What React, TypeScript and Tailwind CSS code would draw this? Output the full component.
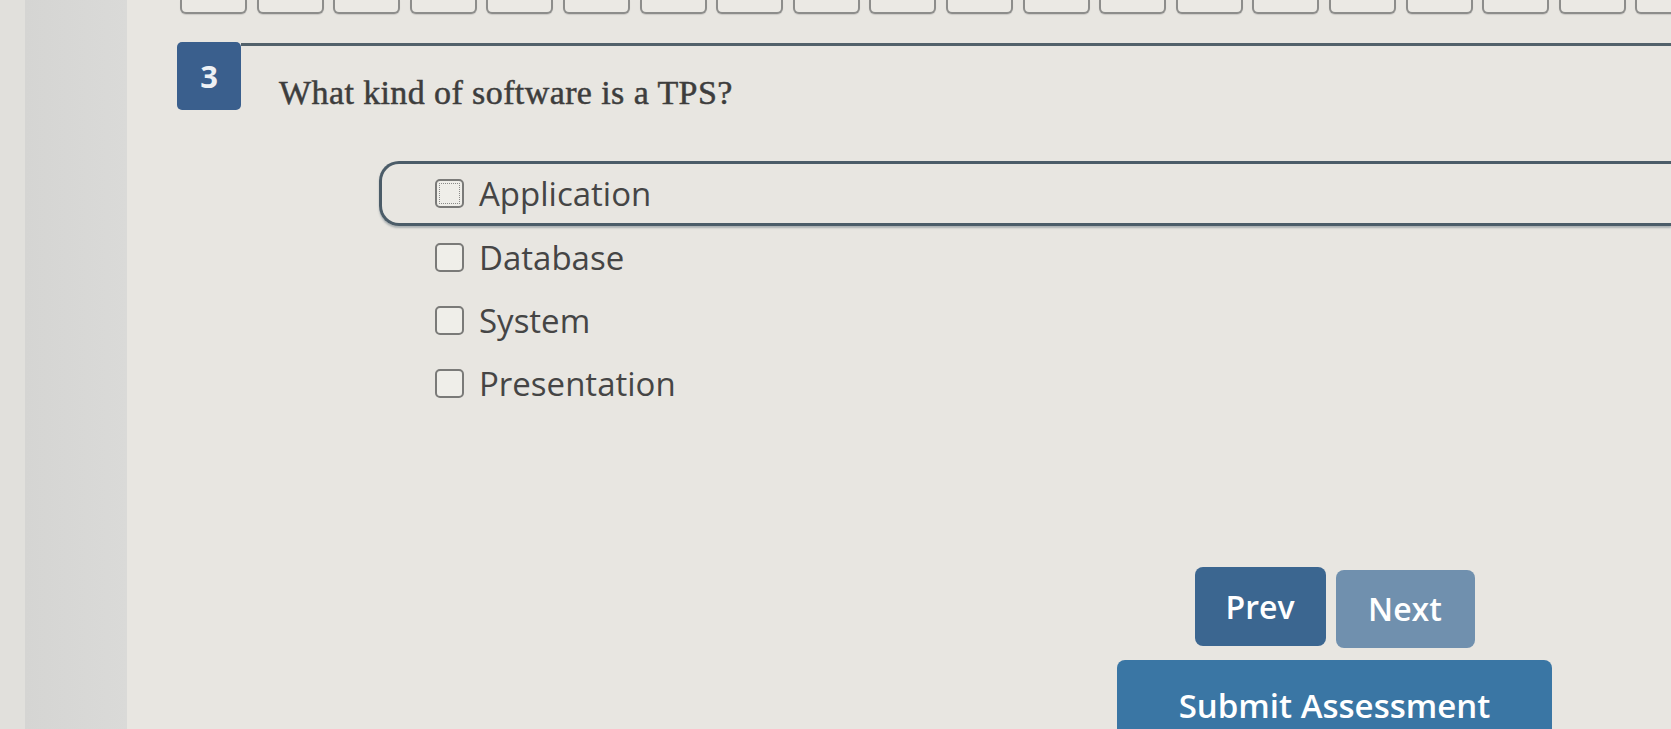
import React, { useState } from 'react';

const options = ['Application', 'Database', 'System', 'Presentation'];

const App: React.FC = () => {
    const [focused] = useState(0);
    const [checked, setChecked] = useState<number[]>([]);

    const toggle = (i: number) => {
        setChecked(checked.includes(i) ? checked.filter((c) => c !== i) : [...checked, i]);
    };

    return (
        <div className="flex h-[729px] w-full overflow-hidden bg-[#e8e6e1] font-['Open_Sans',sans-serif]">
            {/* Left edge */}
            <div className="w-[25px] shrink-0 bg-[#e1e0dc]" />
            <div className="w-[102px] shrink-0 bg-gradient-to-r from-[#d5d5d3] to-[#dadad8]" />

            <div className="flex min-w-0 flex-1 flex-col">
                {/* Question navigator tiles (tops cut off) */}
                <div className="ml-[53px] flex h-[14px] shrink-0 gap-[9.6px]">
                    {Array.from({ length: 20 }).map((_, i) => (
                        <div
                            key={i}
                            className="h-[14px] w-[67px] shrink-0 rounded-b-[6px] border-x-2 border-b-2 border-[#8d8d8b] bg-[#ebe9e4] shadow-[0_1px_1px_rgba(0,0,0,0.12)]"
                        />
                    ))}
                </div>

                {/* Question header */}
                <div className="ml-[50px] mt-[28px] flex h-[68px] items-start">
                    <div className="flex h-[68px] w-[64px] shrink-0 items-center justify-center rounded-[5px] bg-[#3a5f8d] text-[31px] font-bold leading-none text-[#eef1f5]">
                        3
                    </div>
                    <div className="mt-[1px] flex-1 border-t-[3px] border-[#52616a] pl-[38px] pt-[30px]">
                        <h2 className="font-['Liberation_Serif',serif] text-[34px] leading-[34px] tracking-[0.4px] text-[#3d3d3d] [-webkit-text-stroke:0.5px_#3d3d3d]">
                            What kind of software is a TPS?
                        </h2>
                    </div>
                </div>

                {/* Answer options */}
                <div className="ml-[252px] mt-[51px] flex flex-col">
                    {options.map((opt, i) => (
                        <label
                            key={opt}
                            onClick={() => toggle(i)}
                            className={`flex cursor-pointer items-center gap-[15px] pl-[53px] ${
                                focused === i
                                    ? 'h-[65px] rounded-l-[20px] border-y-[3px] border-l-[3px] border-[#4b5c68] shadow-[0_2px_2px_rgba(60,80,95,0.35)]'
                                    : 'h-[63px] border-y-[3px] border-l-[3px] border-transparent'
                            }`}
                        >
                            <span
                                className={`flex h-[29px] w-[29px] shrink-0 items-center justify-center rounded-[5px] border-2 border-[#7a7a78] bg-[#efeee9] ${
                                    focused === i ? 'outline outline-1 outline-dotted outline-[#8a8a88] -outline-offset-[5px]' : ''
                                }`}
                            >
                                {checked.includes(i) && (
                                    <svg viewBox="0 0 24 24" className="h-[20px] w-[20px]" fill="none" stroke="#3a5f8d" strokeWidth="3">
                                        <path d="M5 12l5 5 9-10" strokeLinecap="round" strokeLinejoin="round" />
                                    </svg>
                                )}
                            </span>
                            <span className="text-[33px] leading-none text-[#454545]">{opt}</span>
                        </label>
                    ))}
                </div>

                {/* Navigation */}
                <div className="mt-[152px] flex justify-end pr-[119px]">
                    <div className="flex w-[435px] flex-col items-center">
                        <div className="flex items-start gap-[10px]">
                            <button className="h-[79px] w-[131px] rounded-[8px] bg-[#3b6690] text-[32px] font-semibold leading-none text-white">
                                Prev
                            </button>
                            <button className="mt-[3px] h-[78px] w-[139px] rounded-[8px] bg-[#7090ae] text-[32px] font-semibold leading-none text-white">
                                Next
                            </button>
                        </div>
                        <button className="mt-[12px] flex h-[100px] w-[435px] shrink-0 items-start justify-center rounded-[8px] bg-[#3a76a4] pt-[29px] text-[33px] font-semibold leading-none text-white">
                            Submit Assessment
                        </button>
                    </div>
                </div>
            </div>
        </div>
    );
};

export default App;
